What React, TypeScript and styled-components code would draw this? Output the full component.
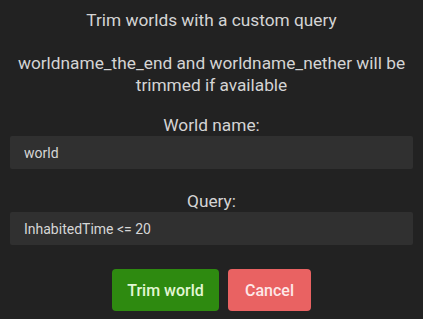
import React from "react";
import styled, { createGlobalStyle } from "styled-components";

const Global = createGlobalStyle`
  html, body { margin: 0; padding: 0; background: #222222; }
  body { font-family: Roboto, "Liberation Sans", Arial, sans-serif; }
  * { box-sizing: border-box; }
`;

const Dialog = styled.div`
  width: 423px;
  min-height: 319px;
  background: #222222;
  padding: 9px 10px 0;
  display: flex;
  flex-direction: column;
  align-items: stretch;
  color: #d4d4d4;
  & > * { flex-shrink: 0; }
`;

const Title = styled.h1`
  margin: 0;
  font-size: 17.3px;
  font-weight: 400;
  line-height: 22px;
  text-align: center;
`;

const Note = styled.p`
  margin: 21px 0 0;
  font-size: 17.3px;
  line-height: 22px;
  text-align: center;
  white-space: nowrap;
`;

const Label = styled.label<{ $top: number }>`
  display: block;
  margin-top: ${(p) => p.$top}px;
  font-size: 17.3px;
  line-height: 22px;
  text-align: center;
`;

const Field = styled.input`
  display: block;
  width: 100%;
  height: 33px;
  border: none;
  outline: none;
  background: #303030;
  color: #d6d6d6;
  font-family: Roboto, "Liberation Sans", Arial, sans-serif;
  font-size: 14px;
  padding: 0 14px;
  border-radius: 2px;
`;

const Actions = styled.div`
  display: flex;
  justify-content: center;
  gap: 9px;
  margin-top: 24px;
`;

const Button = styled.button<{ $tone: "ok" | "cancel"; $w: number }>`
  width: ${(p) => p.$w}px;
  height: 42px;
  border: none;
  border-radius: 4px;
  font-family: Roboto, "Liberation Sans", Arial, sans-serif;
  font-size: 16px;
  font-weight: 500;
  background: ${(p) => (p.$tone === "ok" ? "#2e8a10" : "#e96262")};
  color: ${(p) => (p.$tone === "ok" ? "#e2f7d4" : "#fde8e8")};
  cursor: pointer;
`;

export default function App() {
  return (
    <>
      <Global />
      <Dialog>
        <Title>Trim worlds with a custom query</Title>
        <Note>
          worldname_the_end and worldname_nether will be
          <br />
          trimmed if available
        </Note>
        <Label $top={18}>World name:</Label>
        <Field defaultValue="world" />
        <Label $top={21}>Query:</Label>
        <Field defaultValue="InhabitedTime <= 20" />
        <Actions>
          <Button $tone="ok" $w={107}>Trim world</Button>
          <Button $tone="cancel" $w={83}>Cancel</Button>
        </Actions>
      </Dialog>
    </>
  );
}
